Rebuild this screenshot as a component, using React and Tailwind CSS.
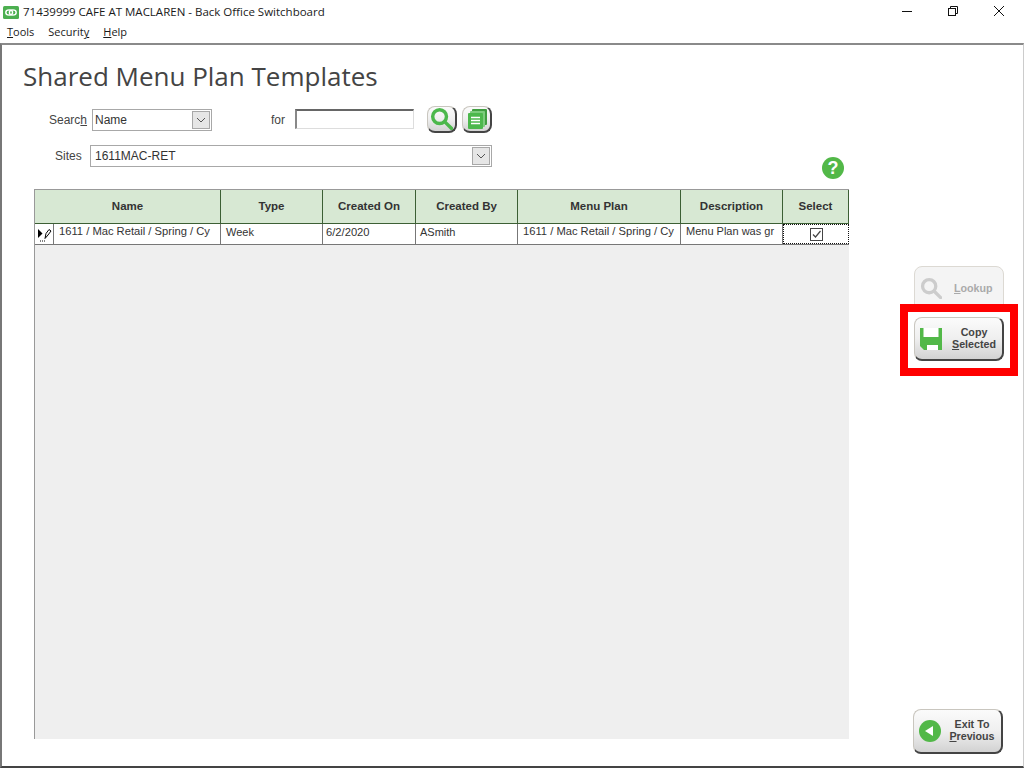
import React from "react";

const columns = [
  { name: "Name", width: "w-[186px]" },
  { name: "Type", width: "w-[102px]" },
  { name: "Created On", width: "w-[93px]" },
  { name: "Created By", width: "w-[102px]" },
  { name: "Menu Plan", width: "w-[163px]" },
  { name: "Description", width: "w-[102px]" },
  { name: "Select", width: "w-[66px]" },
];

const GlossyButton = ({ className, children }) => (
  <div className={`rounded-[8px] border border-[#c9c6bf] border-r-2 border-b-2 border-r-[#444] border-b-[#444] bg-gradient-to-b from-[#fbfbfb] via-[#efefef] to-[#d2d2d2] ${className}`}>
    {children}
  </div>
);

const Chevron = () => (
  <div className="flex h-[18px] w-[18px] items-center justify-center border border-[#a8a8a8] bg-[#e6e6e6]">
    <svg width="10" height="6" viewBox="0 0 10 6" fill="none" stroke="#555" strokeWidth="1">
      <path d="M1 1l4 4 4-4" />
    </svg>
  </div>
);

const SearchIcon = ({ color, size }) => (
  <svg width={size} height={size} viewBox="0 0 24 24" fill="none" stroke={color} strokeWidth="3.6">
    <circle cx="10" cy="10" r="7.2" />
    <path d="M15.5 15.5L22.5 22.5" strokeLinecap="round" />
  </svg>
);

const App = () => {
  return (
    <div className="flex h-[768px] w-[1024px] flex-col overflow-hidden bg-white font-['Liberation_Sans',sans-serif] text-[#222]">
      <div className="flex h-[22px] shrink-0 items-center pr-[2px] pl-[3px] font-['Open_Sans',sans-serif] text-[11.5px] text-[#1a1a1a]">
        <svg width="16" height="13" viewBox="0 0 16 13" className="mt-[2px] mr-[4px]">
          <rect width="16" height="13" rx="1.5" fill="#4caf50" />
          <ellipse cx="6.2" cy="6.5" rx="3.4" ry="2.6" fill="none" stroke="#fff" strokeWidth="1.4" />
          <ellipse cx="9.8" cy="6.5" rx="3.4" ry="2.6" fill="none" stroke="#fff" strokeWidth="1.4" />
        </svg>
        <span className="mt-[2px] whitespace-nowrap">71439999 CAFE AT MACLAREN - Back Office Switchboard</span>
        <div className="-mt-[1px] ml-auto flex items-center">
          <div className="flex w-[46px] justify-center">
            <svg width="12" height="12" viewBox="0 0 12 12" stroke="#111" strokeWidth="1"><path d="M1 6.5h10" /></svg>
          </div>
          <div className="flex w-[46px] justify-center">
            <svg width="12" height="12" viewBox="0 0 12 12" fill="none" stroke="#111" strokeWidth="1">
              <rect x="1.5" y="3.5" width="7" height="7" />
              <path d="M3.5 3.5v-2h7v7h-2" />
            </svg>
          </div>
          <div className="flex w-[46px] justify-center pr-[1px]">
            <svg width="12" height="12" viewBox="0 0 12 12" stroke="#111" strokeWidth="1"><path d="M1 1l10 10M11 1L1 11" /></svg>
          </div>
        </div>
      </div>

      <div className="flex h-[21px] shrink-0 items-center gap-[14px] pl-[7px] font-['Open_Sans',sans-serif] text-[11px] text-[#1a1a1a]">
        <span><u>T</u>ools</span>
        <span>Securit<u>y</u></span>
        <span><u>H</u>elp</span>
      </div>

      <div className="flex min-h-0 flex-1 border-t-2 border-r border-b-2 border-l-2 border-t-[#8a8a8a] border-r-[#ccc] border-b-[#444] border-l-[#777]">
        <div className="flex w-[910px] shrink-0 flex-col pl-[21px]">
          <h1 className="mt-[12px] h-[38px] whitespace-nowrap font-['Open_Sans',sans-serif] text-[26px] leading-[38px] text-[#444]">
            Shared Menu Plan Templates
          </h1>

          <div className="mt-[10px] flex h-[30px] items-center">
            <span className="ml-[26px] w-[43px] text-[12px] text-[#444]">Searc<u>h</u></span>
            <div className="flex h-[22px] w-[120px] items-center justify-between border border-[#a8a8a8] pr-[1px] pl-[2px] text-[12px] text-[#333]">
              Name
              <Chevron />
            </div>
            <span className="ml-[59px] w-[24px] text-[12px] text-[#444]">for</span>
            <div className="mb-[2px] h-[20px] w-[119px] border border-t-2 border-l-2 border-[#ddd] border-t-[#666] border-l-[#888]" />
            <GlossyButton className="mb-[2px] ml-[13px] flex h-[27px] w-[30px] items-center justify-center">
              <SearchIcon color="#4cb84c" size={23} />
            </GlossyButton>
            <GlossyButton className="mb-[2px] ml-[5px] flex h-[27px] w-[30px] items-center justify-center">
              <svg width="22" height="22" viewBox="0 0 22 22">
                <rect x="6" y="1" width="15" height="16" rx="1" fill="#3f9e3f" />
                <rect x="4" y="3" width="15" height="16" rx="1" fill="#7ccc7c" />
                <rect x="2" y="5" width="15" height="16" rx="1" fill="#4cb84c" />
                <path d="M5 9.5h9M5 12.5h9M5 15.5h9" stroke="#fff" strokeWidth="1.6" />
              </svg>
            </GlossyButton>
          </div>

          <div className="mt-[10px] flex h-[22px] items-center">
            <span className="ml-[32px] w-[35px] text-[12px] text-[#444]">Sites</span>
            <div className="flex h-[22px] w-[402px] items-center justify-between border border-[#a8a8a8] pr-[1px] pl-[4px] text-[12px] text-[#333]">
              1611MAC-RET
              <Chevron />
            </div>
          </div>

          <div className="flex h-[22px] justify-end pr-[68px]">
            <div className="-mt-[10px] flex h-[22px] w-[22px] items-center justify-center rounded-full bg-[#52b848] text-[18px] leading-none font-bold text-white">?</div>
          </div>

          <div className="mb-[27px] ml-[11px] flex min-h-0 w-[815px] flex-1 flex-col border-l border-[#999] bg-[#efefef]">
            <div className="flex h-[35px] shrink-0 border-t border-[#999] bg-[#d7e8d3] text-[11.5px] font-bold text-[#333]">
              {columns.map((col) => (
                <div key={col.name} className={`flex items-center justify-center border-r border-b border-[#3c5f34] ${col.width}`}>
                  {col.name}
                </div>
              ))}
            </div>
            <div className="flex h-[21px] shrink-0 border-b border-[#777] bg-white text-[11.2px] text-[#333]">
              <div className="flex w-[19px] items-center justify-center border-r border-[#777]">
                <svg width="15" height="15" viewBox="0 0 15 15">
                  <path d="M1 2l4.5 4.5L1 11z" fill="#000" />
                  <path d="M8 11.5l1-5 3-4 2 1.5-3 4z" fill="none" stroke="#000" strokeWidth="1" />
                  <path d="M3 14h1M5 14h1M7 14h1" stroke="#000" />
                </svg>
              </div>
              <div className="w-[167px] border-r border-[#777] pl-[5px] leading-[15px] whitespace-nowrap">1611 / Mac Retail / Spring / Cy</div>
              <div className="w-[102px] border-r border-[#777] pl-[5px] text-[11px] leading-[17px]">Week</div>
              <div className="w-[93px] border-r border-[#777] pl-[3px] leading-[17px]">6/2/2020</div>
              <div className="w-[102px] border-r border-[#777] pl-[4px] text-[11px] leading-[17px]">ASmith</div>
              <div className="w-[163px] border-r border-[#777] pl-[5px] leading-[15px] whitespace-nowrap">1611 / Mac Retail / Spring / Cy</div>
              <div className="w-[102px] border-r border-[#777] pl-[5px] text-[11px] leading-[15px] whitespace-nowrap">Menu Plan was gr</div>
              <div className="flex w-[66px] items-center justify-center border border-dotted border-[#111]">
                <div className="flex h-[13px] w-[13px] items-center justify-center border border-[#444]">
                  <svg width="11" height="11" viewBox="0 0 11 11" fill="none" stroke="#444" strokeWidth="1.2"><path d="M2 5.5l2.5 2.5L9.5 2" /></svg>
                </div>
              </div>
            </div>
          </div>
        </div>

        <div className="relative flex flex-1 flex-col pt-[221px] pl-[2px]">
          <div className="flex h-[44px] w-[90px] items-center rounded-t-[8px] border border-[#dcd9d3] bg-[#f4f4f4] pl-[5px] text-[10.7px] font-bold text-[#aaa]">
            <SearchIcon color="#cccccc" size={22} />
            <span className="ml-[12px]"><u>L</u>ookup</span>
          </div>
          <GlossyButton className="mt-[7px] flex h-[44px] w-[90px] items-center pl-[5px] text-[10.7px] leading-[12px] font-bold text-[#444]">
            <svg width="22" height="22" viewBox="0 0 22 22">
              <path d="M0 0h22v22H4l-4-4z" fill="#52b848" />
              <rect x="3.5" y="0" width="15" height="9" fill="#fff" />
              <rect x="7" y="17" width="11" height="5" fill="#fff" />
            </svg>
            <span className="mb-[2px] ml-[9px] w-[46px] text-center">Copy <u>S</u>elected</span>
          </GlossyButton>

          {/* red highlight drawn on top of the screenshot */}
          <div className="absolute top-[259px] left-[-12px] h-[72px] w-[118px] border-[8px] border-[#ff0000]" />

          <GlossyButton className="mt-auto mb-[12px] -ml-[1px] flex h-[45px] w-[90px] items-center pl-[5px] text-[10.7px] leading-[12px] font-bold text-[#444]">
            <div className="flex h-[22px] w-[22px] shrink-0 items-center justify-center rounded-full bg-[#52b848]">
              <div className="mr-[3px] h-0 w-0 border-y-[5px] border-r-[8px] border-y-transparent border-r-white" />
            </div>
            <span className="mb-[2px] ml-[6px] w-[50px] text-center">Exit To <u>P</u>revious</span>
          </GlossyButton>
        </div>
      </div>
    </div>
  );
};

export default App;
